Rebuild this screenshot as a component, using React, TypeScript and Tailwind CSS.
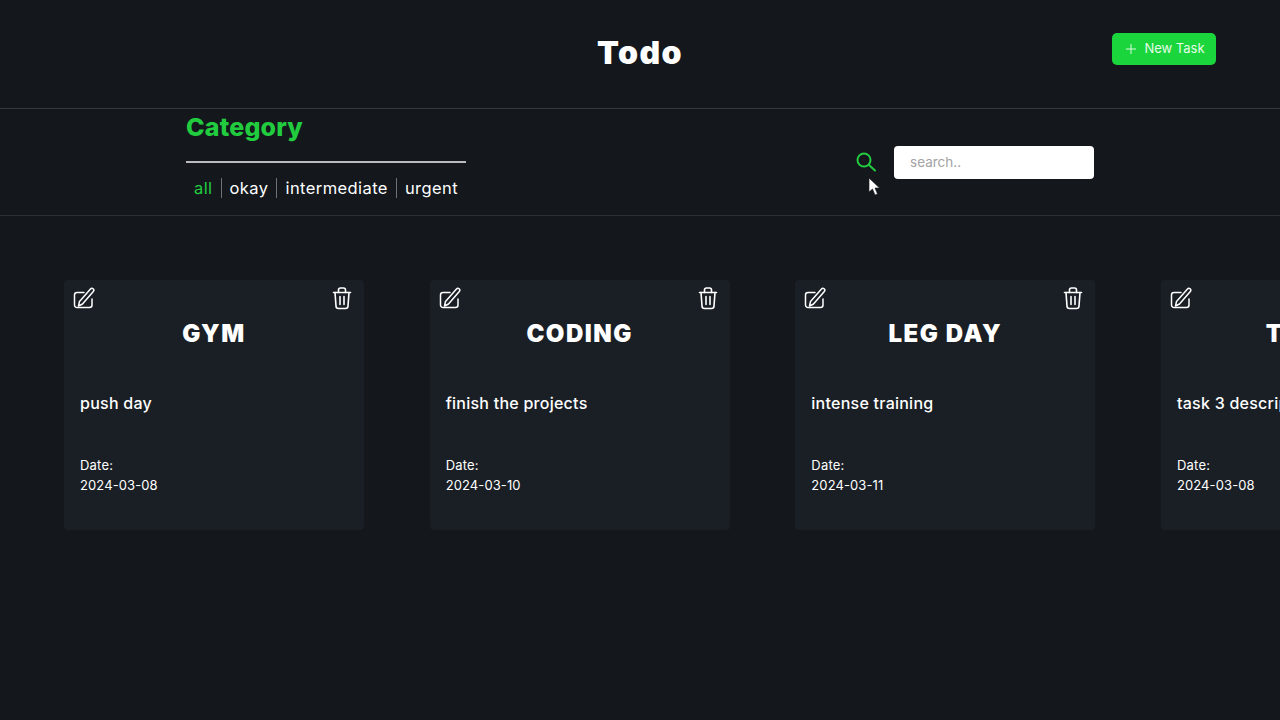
import React from 'react';
import { Plus } from 'lucide-react';

const tasks = [
  { title: 'GYM', desc: 'push day', date: '2024-03-08' },
  { title: 'CODING', desc: 'finish the projects', date: '2024-03-10' },
  { title: 'LEG DAY', desc: 'intense training', date: '2024-03-11' },
  { title: 'TASK3', desc: 'task 3 description', date: '2024-03-08' },
];

const categories = ['all', 'okay', 'intermediate', 'urgent'];

const EditIcon = () => (
  <svg width="24" height="24" viewBox="0 0 24 24" fill="none" stroke="currentColor" strokeWidth="1.5" strokeLinecap="round" strokeLinejoin="round">
    <path d="M12 6.500H5a2.500 2.500 0 0 0-2.500 2.500v10a2.500 2.500 0 0 0 2.500 2.500h12.500a2.500 2.500 0 0 0 2.500-2.500v-6" />
    <path d="M6.500 20l1-4.500L18.500 3a1.800 1.800 0 0 1 2.800 2.400L10.500 18z" />
  </svg>
);

const TrashIcon = () => (
  <svg width="24" height="24" viewBox="0 0 24 24" fill="none" stroke="currentColor" strokeWidth="1.6" strokeLinecap="round" strokeLinejoin="round">
    <path d="M3.500 6.500h17" />
    <path d="M8.500 6.500V4a2 2 0 0 1 2-2h3a2 2 0 0 1 2 2v2.500" />
    <path d="M5 6.500l1 13.500a2.500 2.500 0 0 0 2.500 2.500h7A2.500 2.500 0 0 0 18 20l1-13.500" />
    <path d="M10 10.500v8M14 10.500v8" />
  </svg>
);

const SearchIcon = () => (
  <svg className="-mt-[2px]" width="24" height="24" viewBox="0 0 24 24" fill="none" stroke="#22cc3f" strokeWidth="2" strokeLinecap="round">
    <circle cx="11" cy="10" r="6.500" />
    <path d="M16 15l6 5.500" />
  </svg>
);

const App: React.FC = () => {
  return (
    <div className="relative h-[720px] w-[1280px] overflow-hidden bg-[#14181d] font-['Inter',sans-serif] text-white">
      <header className="flex h-[109px] items-start justify-end border-b border-[#343840] pr-16 pt-[33px]">
        <h1 className="absolute left-0 right-0 top-[31px] text-center text-[32px] font-black leading-[44px] tracking-[1.5px]">Todo</h1>
        <button className="flex h-8 w-[104px] items-center justify-center gap-[5px] rounded-[5px] bg-[#1ad63c] text-[13px] text-[#e6fbe9]">
          <Plus size={16} strokeWidth={1.4} />
          New Task
        </button>
      </header>

      <section className="flex h-[107px] items-start border-b border-[#2b2f36] pl-[186px]">
        <div className="w-[280px]">
          <h2 className="h-[52px] pt-[2px] text-[25px] font-extrabold leading-[32px] tracking-[0.2px] text-[#22cc3f]">Category</h2>
          <div className="h-[2px] bg-[#b9bbbe]" />
          <ul className="mt-[15px] flex items-center text-[16.500px] leading-[20px] tracking-[0.42px]">
            {categories.map((c, i) => (
              <li
                key={c}
                className={`px-2 ${i === 0 ? 'text-[#22cc3f]' : 'text-white'} ${i < 3 ? 'border-r border-[#6e7176]' : ''}`}
              >
                {c}
              </li>
            ))}
          </ul>
        </div>
        <div className="ml-[387px] mt-[37px] flex items-center gap-[17px]">
          <SearchIcon />
          <input
            placeholder="search.."
            className="h-[33px] w-[200px] rounded bg-white px-4 pb-[2px] text-[13.500px] text-black placeholder:text-[#a3a3a3]"
          />
        </div>
      </section>

      <main className="flex gap-[65.670px] pl-16 pt-16">
        {tasks.map((t) => (
          <article key={t.desc} className="h-[250px] w-[300px] shrink-0 rounded bg-[#1a1f26] px-4">
            <div className="ml-[-8px] mr-[-6px] flex justify-between pt-[6px]">
              <EditIcon />
              <TrashIcon />
            </div>
            <h3 className="mt-[8px] text-center text-[24px] font-black leading-[32px] tracking-[1.500px]">{t.title}</h3>
            <p className="mt-[41px] whitespace-nowrap text-[16px] font-medium leading-[24px] tracking-[0.25px]">{t.desc}</p>
            <p className="mt-[40px] text-[13px] leading-[20px] tracking-[0.2px]">Date:</p>
            <p className="text-[13px] leading-[20px] tracking-[0.1px]">{t.date}</p>
          </article>
        ))}
      </main>

      <svg className="absolute left-[868px] top-[177px]" width="12" height="19" viewBox="0 0 12 19">
        <path d="M1 1v14l3.500-3 2.500 6 2.500-1-2.500-6h4.500z" fill="#fff" stroke="#14181d" strokeWidth="0.6" />
      </svg>
    </div>
  );
};

export default App;
